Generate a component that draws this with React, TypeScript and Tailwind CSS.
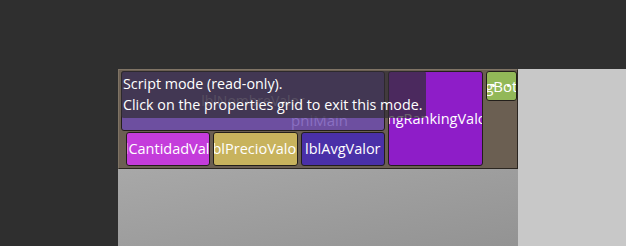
const font = { fontFamily: '"Open Sans", "Noto Sans", sans-serif' };

function Block({ text, className }: { text: string; className: string }) {
  return (
    <div
      className={`flex items-center justify-center overflow-hidden whitespace-nowrap rounded-[3px] border border-[#231f1b] text-white ${className}`}
    >
      <span>{text}</span>
    </div>
  );
}

export default function App() {
  return (
    <div className="relative flex h-[246px] w-[626px] flex-col overflow-hidden bg-[#2f2f2f]" style={font}>
      <div className="h-[69px] shrink-0" />
      <div className="flex flex-1">
        <div className="ml-[118px] flex w-[400px] flex-col">
          {/* pnlMain */}
          <div className="relative flex h-[100px] shrink-0 gap-[3px] border border-[#2b2621] border-t-[#7f7465] border-l-[#7f7465] bg-[#6b5f52] pl-[2px] pt-[1px]">
            <div className="flex w-[264px] flex-col gap-[1px]">
              <div className="relative flex h-[60px] items-center justify-center rounded-[3px] border border-[#231f1b] bg-[#6d4fa0] text-[14px] text-[#b9a8d8]">
                <span className="mt-[-2px]">lblNombreValor</span>
              </div>
              <div className="ml-[5px] flex gap-[3px] text-[14.5px]">
                <Block text="lblCantidadValor" className="h-[34px] w-[85px] bg-[#c43cdb]" />
                <Block text="lblPrecioValor" className="h-[34px] w-[85px] bg-[#c8b35d]" />
                <Block text="lblAvgValor" className="h-[34px] w-[85px] bg-[#4a30a8]" />
              </div>
            </div>
            <Block text="imgRankingValor" className="h-[95px] w-[95px] bg-[#8e1dc8] text-[14.5px] text-[#f0dcf8]" />
            <div className="relative">
              <Block text="imgBoton" className="h-[30px] w-[31px] bg-[#92b858] text-[15px]" />
              <span className="absolute left-[6px] top-[13px] h-[3px] w-[3px] rounded-full bg-white" />
              <span className="absolute left-[21px] top-[13px] h-[3px] w-[3px] rounded-full bg-white" />
            </div>
            <span className="absolute left-[172px] top-[39px] text-[15px] text-[#8a70c2]">pnlMain</span>
            {/* tooltip */}
            <div className="absolute left-[2px] top-[1px] h-[47px] w-[305px] rounded-[3px] bg-[rgba(50,46,52,0.72)] px-[2px] pt-[2px] text-[14.3px] leading-[21px] text-white">
              <div>Script mode (read-only).</div>
              <div>Click on the properties grid to exit this mode.</div>
            </div>
          </div>
          <div className="flex-1 bg-linear-to-br from-[#a8a8a8] to-[#939393]" />
        </div>
        <div className="flex-1 bg-[#c8c8c8]" />
      </div>
    </div>
  );
}
